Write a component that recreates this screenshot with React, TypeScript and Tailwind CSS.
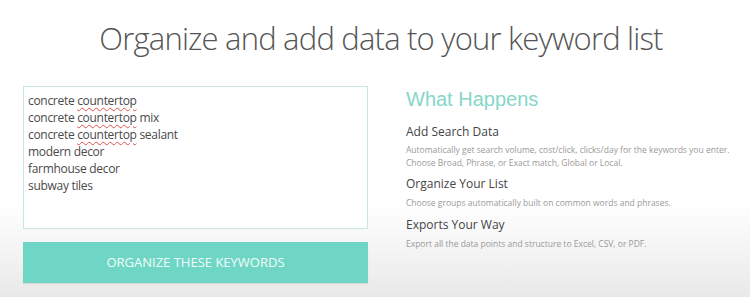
import React from "react";

const keywords = [
  ["concrete ", "countertop", ""],
  ["concrete ", "countertop", " mix"],
  ["concrete ", "countertop", " sealant"],
  ["modern decor", "", ""],
  ["farmhouse decor", "", ""],
  ["subway tiles", "", ""],
];

export default function App() {
  return (
    <div className="w-[750px] h-[297px] overflow-hidden bg-[linear-gradient(to_bottom,#ffffff_0%,#ffffff_68%,#e9e9e9_100%)] font-['Open_Sans',sans-serif]">
      <h1 className="pt-[18px] h-[86px] text-center text-[31px] tracking-[-0.8px] font-light text-[#555] leading-[40px] pl-[12px]">
        Organize and add data to your keyword list
      </h1>
      <div className="flex pl-[23px]">
        <div className="w-[345px] flex flex-col gap-[13px]">
          <div className="h-[143px] border border-[#c8e6e2] bg-white px-[4px] pt-[5px] text-[12px] tracking-[-0.3px] leading-[17px] text-[#4a4a4a]">
            {keywords.map(([a, b, c], i) => (
              <div key={i}>
                {a}
                {b && (
                  <span className="underline decoration-wavy decoration-[#e05050] decoration-[1px] underline-offset-[2px]">
                    {b}
                  </span>
                )}
                {c}
              </div>
            ))}
          </div>
          <button className="h-[41px] w-full bg-[#6fd6c5] text-white/90 text-[13px] shadow-[0_1px_1px_rgba(0,0,0,0.08)]">
            ORGANIZE THESE KEYWORDS
          </button>
        </div>
        <div className="ml-[38px] pt-[1px]">
          <h2 className="font-['Liberation_Sans',Arial,sans-serif] text-[20px] leading-[24px] text-[#86d6c9]">
            What Happens
          </h2>
          <div className="mt-[12px] text-[12px] leading-[17px] text-[#444]">Add Search Data</div>
          <p className="mt-[3px] text-[8.5px] leading-[13px] text-[#9a9a9a]">
            Automatically get search volume, cost/click, clicks/day for the keywords you enter.
            <br />
            Choose Broad, Phrase, or Exact match, Global or Local.
          </p>
          <div className="mt-[6px] text-[12px] leading-[17px] text-[#444]">Organize Your List</div>
          <p className="mt-[4px] text-[8.5px] leading-[13px] text-[#9a9a9a]">
            Choose groups automatically built on common words and phrases.
          </p>
          <div className="mt-[7px] text-[12px] leading-[17px] text-[#444]">Exports Your Way</div>
          <p className="mt-[4px] text-[8.5px] leading-[13px] text-[#9a9a9a]">
            Export all the data points and structure to Excel, CSV, or PDF.
          </p>
        </div>
      </div>
    </div>
  );
}
